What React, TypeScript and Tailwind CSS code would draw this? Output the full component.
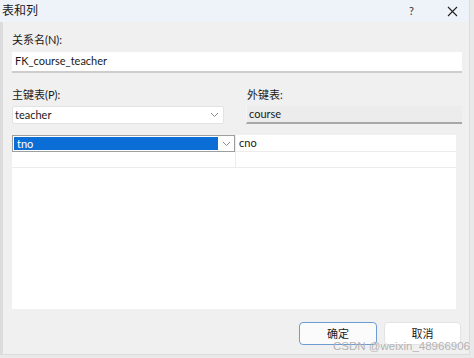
const Chevron = ({ className = '' }: { className?: string }) => (
    <svg width="9" height="6" viewBox="0 0 9 6" className={className} fill="none" stroke="#8a8a8a" strokeWidth="1">
        <path d="M1 1l3.5 3.5L8 1" />
    </svg>
)

const App = () => {
    return (
        <div
            className="relative w-[474px] h-[358px] overflow-hidden bg-[#e9e9e9] text-[11px] text-[#1a1a1a]"
            style={{ fontFamily: 'Lato, "Noto Sans CJK SC", sans-serif' }}
        >
            {/* window */}
            <div className="w-[470px] h-[355px] bg-[#f0f0f0] border-l-[3px] border-r border-b border-[#dcdcdc] flex flex-col">
                {/* title bar */}
                <div className="h-[22px] bg-[#eef3f9] flex items-center -ml-[3px] pl-[2px] text-[12px]">
                    <span className="leading-none">表和列</span>
                    <span className="ml-auto mr-[33px] text-[11px] text-[#333]">?</span>
                    <svg width="11" height="11" viewBox="0 0 11 11" className="mr-[11px]" stroke="#222" strokeWidth="1.1">
                        <path d="M1 1l9 9M10 1l-9 9" />
                    </svg>
                </div>

                <div className="flex flex-col pl-[9px] pr-[4px] pt-[10px]">
                    <div className="h-[16px] leading-[16px]">关系名(N):</div>
                    <div className="mt-[4px] w-[450px] h-[21px] bg-white border-b-2 border-[#cdcdcd] flex items-center pl-[3px]">
                        FK_course_teacher
                    </div>

                    <div className="mt-[14px] flex">
                        <div className="w-[212px] flex flex-col">
                            <div className="h-[16px] leading-[16px]">主键表(P):</div>
                            <div className="mt-[3px] h-[18px] bg-white border border-[#e2e2e2] rounded-[2px] flex items-center pl-[2px] pr-[4px]">
                                <span>teacher</span>
                                <Chevron className="ml-auto" />
                            </div>
                        </div>
                        <div className="ml-[22px] w-[216px] flex flex-col">
                            <div className="h-[16px] leading-[16px] pl-[1px]">外键表:</div>
                            <div className="mt-[3px] h-[18px] bg-[#ececec] border-l border-[#f6f6f6] border-b-2 border-b-[#a8a8a8] flex items-center pl-[2px]">
                                course
                            </div>
                        </div>
                    </div>

                    {/* column grid */}
                    <div className="mt-[11px] w-[444px] h-[174px] bg-white flex flex-col">
                        <div className="h-[17px] flex border-b border-[#ececec]">
                            <div className="w-[223px] h-[17px] border border-[#9e9e9e] bg-white flex items-center pl-[1px]">
                                <div className="w-[204px] h-[13px] bg-[#0a6ed6] text-white flex items-center pl-[3px] leading-none">
                                    tno
                                </div>
                                <div className="flex-1 flex justify-center">
                                    <Chevron />
                                </div>
                            </div>
                            <div className="flex-1 flex items-center pl-[3px] border-l border-[#ececec]">cno</div>
                        </div>
                        <div className="h-[16px] flex border-b border-[#ececec]">
                            <div className="w-[223px]" />
                            <div className="flex-1 border-l border-[#ececec]" />
                        </div>
                    </div>

                    {/* buttons */}
                    <div className="mt-[13px] flex justify-end gap-[7px] pr-[4px]">
                        <button className="w-[78px] h-[23px] bg-[#fbfbfb] border border-[#6d9bd4] rounded-[4px] leading-none">
                            确定
                        </button>
                        <button className="w-[77px] h-[23px] bg-white border border-[#e3e3e3] rounded-[4px] leading-none">
                            取消
                        </button>
                    </div>
                </div>
            </div>

            {/* watermark */}
            <div
                className="absolute left-[333px] top-[339px] whitespace-nowrap text-[11.5px] text-[#b4b4b4] leading-[14px]"
                style={{ fontFamily: '"Liberation Sans", sans-serif' }}
            >
                CSDN @weixin_48966906
            </div>
        </div>
    )
}

export default App
